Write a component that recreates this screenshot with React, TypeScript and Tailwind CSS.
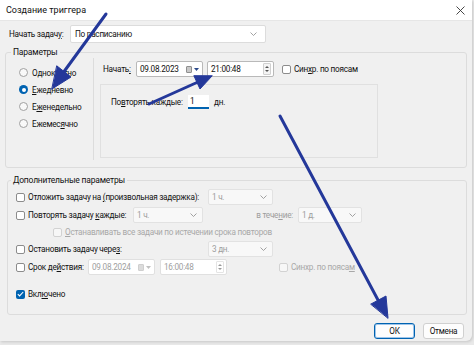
import React from "react";

const Chevron = () => (
	<svg width="7" height="4" viewBox="0 0 7 4" className="shrink-0">
		<path d="M0.5 0.5l3 3 3-3" fill="none" stroke="#8a8a8a" strokeWidth="0.8" />
	</svg>
);

function Combo({
	value,
	width,
	height = "h-[16px]",
	disabled = false,
}: {
	value: string;
	width: string;
	height?: string;
	disabled?: boolean;
}) {
	return (
		<div
			className={`${width} ${height} flex items-center justify-between pl-[3px] pr-[5px] rounded-[2px] border ${
				disabled
					? "border-[#e2e2e2] bg-[#f8f8f8] text-[#9d9d9d]"
					: "border-[#d6d6d6] bg-white text-[#111]"
			}`}
		>
			<span>{value}</span>
			<Chevron />
		</div>
	);
}

function DateField({ value, disabled = false }: { value: string; disabled?: boolean }) {
	return (
		<div
			className={`w-[67px] h-[16px] flex items-center justify-between pl-[3px] pr-[3px] rounded-[2px] border ${
				disabled ? "border-[#e0e0e0] bg-white text-[#a0a0a0]" : "border-[#b9b9b9] bg-white text-[#111]"
			}`}
		>
			<span>{value}</span>
			<span className="flex items-center gap-[2px]">
				<span
					className={`w-[6px] h-[7px] rounded-[1px] ${
						disabled ? "bg-[#dcdcdc] border border-[#cfcfcf]" : "bg-[#c8c8c8] border border-[#8f8f8f]"
					}`}
				/>
				<svg width="5" height="3" viewBox="0 0 5 3">
					<path d="M0 0h5L2.5 3z" fill={disabled ? "#c0c0c0" : "#2b4a8a"} />
				</svg>
			</span>
		</div>
	);
}

function TimeField({ value, disabled = false }: { value: string; disabled?: boolean }) {
	return (
		<div
			className={`w-[67px] h-[16px] flex items-center justify-between pl-[3px] pr-[2px] rounded-[2px] border ${
				disabled ? "border-[#e0e0e0] bg-white text-[#a0a0a0]" : "border-[#b9b9b9] bg-white text-[#111]"
			}`}
		>
			<span>{value}</span>
			<span
				className={`w-[8px] h-[12px] flex flex-col items-center justify-center gap-[2px] rounded-[1px] border ${
					disabled ? "border-[#e4e4e4]" : "border-[#d0d0d0] bg-[#f4f4f4]"
				}`}
			>
				<svg width="4" height="2" viewBox="0 0 4 2">
					<path d="M0 2h4L2 0z" fill={disabled ? "#9a9a9a" : "#555"} />
				</svg>
				<svg width="4" height="2" viewBox="0 0 4 2">
					<path d="M0 0h4L2 2z" fill={disabled ? "#9a9a9a" : "#555"} />
				</svg>
			</span>
		</div>
	);
}

function Check({ checked = false, disabled = false }: { checked?: boolean; disabled?: boolean }) {
	if (checked) {
		return (
			<span className="w-[9px] h-[9px] shrink-0 rounded-[2px] bg-[#0063b1] flex items-center justify-center">
				<svg width="7" height="6" viewBox="0 0 7 6">
					<path d="M0.8 3.1l1.8 1.8L6.2 1" fill="none" stroke="#fff" strokeWidth="1.1" />
				</svg>
			</span>
		);
	}
	return (
		<span
			className={`w-[9px] h-[9px] shrink-0 rounded-[2px] border ${
				disabled ? "border-[#d2d2d2] bg-[#f7f7f7]" : "border-[#8c8c8c] bg-white"
			}`}
		/>
	);
}

function Radio({ checked = false, children }: { checked?: boolean; children: React.ReactNode }) {
	return (
		<div className="h-[17px] flex items-center gap-[4px]">
			{checked ? (
				<span className="w-[9px] h-[9px] rounded-full bg-[#0063b1] flex items-center justify-center">
					<span className="w-[4px] h-[4px] rounded-full bg-white" />
				</span>
			) : (
				<span className="w-[9px] h-[9px] rounded-full border border-[#a0a0a0] bg-[#f9f9f9]" />
			)}
			<span>{children}</span>
		</div>
	);
}

function Arrows() {
	return (
		<svg className="absolute inset-0 pointer-events-none" width="474" height="345" viewBox="0 0 474 345">
			<g stroke="#24389a" strokeWidth="3" strokeLinecap="round" fill="#24389a">
				<line x1="106" y1="14" x2="63" y2="73" />
				<polygon points="52,89 71,77 57,66" strokeWidth="1" />
				<line x1="149" y1="104" x2="198" y2="82" />
				<polygon points="212,76 200,89 194,76" strokeWidth="1" />
				<line x1="280" y1="116" x2="378" y2="300" />
				<polygon points="388,318 386,296 371,304" strokeWidth="1" />
			</g>
		</svg>
	);
}

export default function App() {
	return (
		<div className="relative w-[474px] h-[345px] overflow-hidden whitespace-nowrap bg-[#e9e9e9] font-['Roboto',sans-serif] text-[8.2px] tracking-[-0.25px] leading-[12px] text-[#111]">
			<div className="w-[472px] h-[341px] flex flex-col bg-[#f0f0f0] rounded-br-[6px] shadow-[1px_1px_3px_rgba(0,0,0,0.15)]">
				{/* title bar */}
				<div className="h-[21px] shrink-0 flex items-center justify-between pl-[6px] pr-[7px] bg-white border-b border-[#e6e6e6]">
					<span className="text-[9px] tracking-normal">Создание триггера</span>
					<svg width="9" height="9" viewBox="0 0 9 9">
						<path d="M0.5 0.5l8 8M8.5 0.5l-8 8" stroke="#333" strokeWidth="0.9" />
					</svg>
				</div>

				{/* start task */}
				<div className="mt-[4px] h-[18px] flex items-center pl-[9px]">
					<span className="w-[61px]">
						Начать задач<u>у</u>:
					</span>
					<div className="w-[196px] h-[18px] flex items-center justify-between pl-[4px] pr-[8px] rounded-[2px] border border-[#dcdcdc] bg-white">
						<span>По расписанию</span>
						<Chevron />
					</div>
				</div>

				{/* parameters */}
				<fieldset className="mt-[3px] ml-[5px] w-[462px] h-[122px] border border-[#dcdcdc] rounded-[3px]">
					<legend className="ml-[5px] px-[2px] leading-[12px] text-[8.5px] tracking-[-0.2px]">Параметры</legend>
					<div className="flex">
						<div className="w-[88px] h-[102px] pt-[6px] pl-[13px] border-r border-[#dcdcdc]">
							<Radio>Однократно</Radio>
							<Radio checked>
								<u>Е</u>жедневно
							</Radio>
							<Radio>
								Е<u>ж</u>енедельно
							</Radio>
							<Radio>
								Ежемес<u>я</u>чно
							</Radio>
						</div>
						<div className="pl-[6px]">
							<div className="mt-[3px] h-[16px] flex items-center">
								<span className="w-[36px] pl-[3px]">
									Начать<u>:</u>
								</span>
								<DateField value="09.08.2023" />
								<div className="ml-[4px]">
									<TimeField value="21:00:48" />
								</div>
								<div className="ml-[8px] flex items-center gap-[3px]">
									<Check />
									<span>
										Син<u>х</u>р. по поясам
									</span>
								</div>
							</div>
							<div className="mt-[7px] w-[278px] h-[74px] border border-[#e0e0e0] pl-[10px] pt-[10px]">
								<div className="h-[14px] flex items-center">
									<span className="w-[77px]">
										По<u>в</u>торять каждые:
									</span>
									<span className="w-[21px] h-[14px] pl-[2px] bg-white border-b-2 border-[#0063b1] leading-[12px]">
										1
									</span>
									<span className="ml-[5px]">дн.</span>
								</div>
							</div>
						</div>
					</div>
				</fieldset>

				{/* extra parameters */}
				<fieldset className="mt-[6px] ml-[7px] w-[460px] h-[141px] border border-[#dcdcdc] rounded-[3px]">
					<legend className="ml-[3px] px-[2px] leading-[12px] text-[8.5px] tracking-[-0.2px]">
						Дополнительные параметры
					</legend>

					<div className="pl-[8px]">
						<div className="mt-[3px] h-[16px] flex items-center">
							<Check />
							<span className="ml-[3px] w-[180px]">
								Отложить задачу на <u>(</u>произвольная задержка):
							</span>
							<Combo value="1 ч." width="w-[65px]" disabled />
						</div>

						<div className="mt-[2px] h-[16px] flex items-center">
							<Check />
							<span className="ml-[3px] w-[105px]">
								Повторять задачу <u>к</u>аждые:
							</span>
							<Combo value="1 ч." width="w-[70px]" disabled />
							<span className="w-[90px] text-right text-[#9d9d9d]">
								в тече<u>н</u>ие:
							</span>
							<div className="ml-[5px]">
								<Combo value="1 д." width="w-[64px]" disabled />
							</div>
						</div>

						<div className="mt-[1px] h-[16px] flex items-center pl-[37px] text-[#a8a8a8]">
							<Check disabled />
							<span className="ml-[3px]">
								<u>О</u>станавливать все задачи по истечении срока повторов
							</span>
						</div>

						<div className="mt-[1px] h-[16px] flex items-center">
							<Check />
							<span className="ml-[3px] w-[180px]">
								Остановить задачу чере<u>з</u>:
							</span>
							<Combo value="3 дн." width="w-[65px]" disabled />
						</div>

						<div className="mt-[2px] h-[16px] flex items-center">
							<Check />
							<span className="ml-[3px] w-[60px]">
								Срок де<u>й</u>ствия:
							</span>
							<DateField value="09.08.2024" disabled />
							<div className="ml-[5px]">
								<TimeField value="16:00:48" disabled />
							</div>
							<div className="ml-[52px] flex items-center gap-[3px] text-[#a8a8a8]">
								<Check disabled />
								<span>
									Синхр. по пояса<u>м</u>
								</span>
							</div>
						</div>

						<div className="mt-[11px] h-[16px] flex items-center">
							<Check checked />
							<span className="ml-[3px]">
								Вкл<u>ю</u>чено
							</span>
						</div>
					</div>
				</fieldset>

				{/* buttons */}
				<div className="mt-[8px] flex justify-end gap-[8px] pr-[8px]">
					<button className="w-[41px] h-[16px] rounded-[3px] border border-[#0063b1] bg-[#fdfdfd] shadow-[inset_0_0_0_1px_#9ec5ea]">
						ОК
					</button>
					<button className="w-[41px] h-[16px] rounded-[3px] border border-[#d0d0d0] bg-[#fdfdfd]">
						Отмена
					</button>
				</div>
			</div>
			<Arrows />
		</div>
	);
}
